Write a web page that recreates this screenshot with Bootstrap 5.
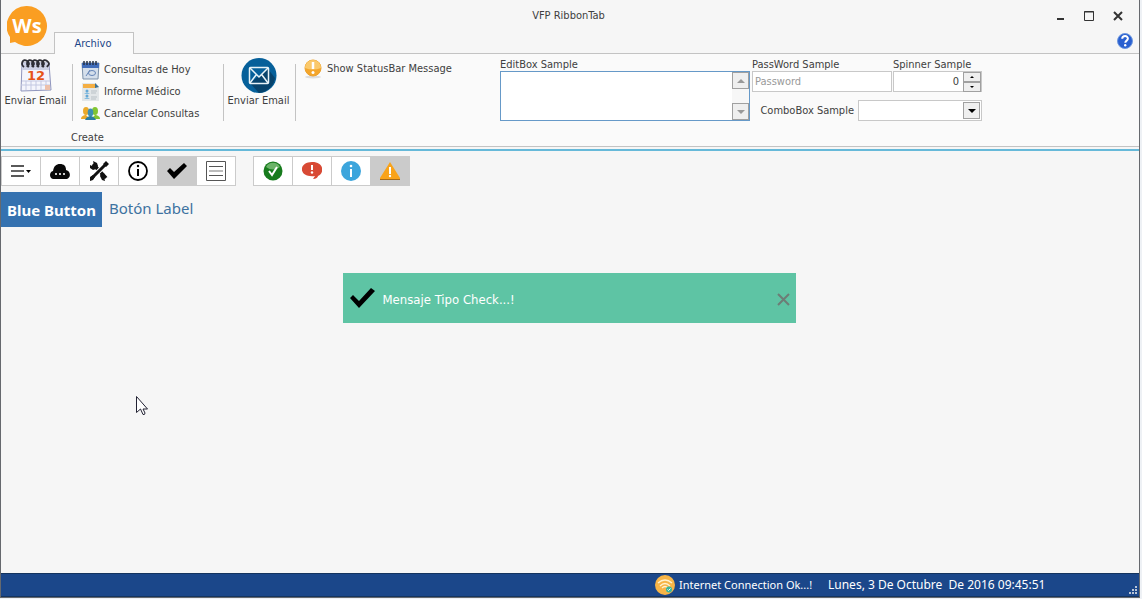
<!DOCTYPE html>
<html lang="es">
<head>
<meta charset="utf-8">
<meta name="viewport" content="width=device-width, initial-scale=1">
<title>VFP RibbonTab</title>
<link href="https://cdn.jsdelivr.net/npm/bootstrap@5.3.0/dist/css/bootstrap.min.css" rel="stylesheet">
<style>
body{background:#f6f6f6;color:#404040;font:11px/14px "DejaVu Sans Condensed","DejaVu Sans",sans-serif}
button,input,select,textarea{font:inherit;color:inherit;border-radius:0}
button{background:none;border:0;padding:0;white-space:nowrap}
svg{display:block;flex:none}
.app-window{min-height:100vh;padding-bottom:1px;background:#eef1f5;padding-right:2px}
.app-frame{border:solid #66696e;border-width:0 1px 1px;background:#f6f6f6}
.brand-logo{width:53px;padding:6px 0 0 6px}
.title-row{height:32px}
.win-title{padding-left:30px}
.win-controls{width:86px;padding-right:15px}
.tab-row{height:22px;margin-bottom:-1px}
.ribbon-tab{width:80px;border:1px solid #c3c3c3;border-bottom:0;background:#fafafa;color:#1c4587;position:relative;padding-right:2px}
.help-btn{margin:0 6px 4px 0}
.ribbon{border:solid #c3c3c3;border-width:1px 0;background:#fafafa;height:94px;padding-top:4px}
.accent-line{height:2px;background:#66b9d9;margin-top:2px}
.group-items{height:73px}
.big-btn{width:71px;height:50px;gap:1px;padding-right:2px}
.divider{width:1px;height:57px;background:#c3c3c3;margin-top:6px}
.group-caption{padding-left:70px}
.small-stack{width:150px;padding:1px 0 0 8px}
.small-stack button{height:22px}
.status-group{width:204px;padding:1px 0 0 7px}
.edit-wrap{width:250px;height:50px;border:1px solid #6699c8;background:#fff}
.edit-wrap textarea{border:0;resize:none;outline:0;overflow:hidden;background:#fff}
.scroll-col{width:17px;background:#f7f7f7}
.scroll-col button,.spin-col button,.combo-arrow{background:#efefef;border:1px solid #a0a0a0;display:flex;align-items:center;justify-content:center}
.scroll-col button{height:17px;color:#999}
.field-label{line-height:13px}
.field{border:1px solid #c8c8c8;background:#fff;height:21px;outline:0}
.field::placeholder{color:#999;opacity:1}
.field-pair{gap:1px;padding-left:2px}
.pass-field{width:140px;padding:0 2px}
.spin-field{width:89px}
.spin-field input{border:0;background:transparent;padding:0 4px;outline:0;text-align:right}
.spin-col{width:18px}
.spin-col button{height:10px}
.combo-wrap{width:124px}
.combo-wrap select{appearance:none}
.combo-arrow{position:absolute;right:2px;top:2px;width:17px;height:17px;pointer-events:none}
.tool-row{margin-top:5px;gap:17px}
.tool-set{border:1px solid #cbcbcb;background:#fff;height:30px}
.tool-set button{width:39px;border-right:1px solid #cbcbcb;display:flex;align-items:center;justify-content:center}
.tool-set button:last-child{border-right:0;width:38px}
.tool-set button.on{background:#cbcbcb}
.label-row{margin-top:6px;font-family:"Noto Sans",sans-serif}
.blue-btn{width:101px;height:35px;background:#3572b0;color:#fff;font-size:15px;font-weight:700}
.label-btn{font-size:15px;line-height:20px;color:#3d72a0;text-decoration:none;margin:6px 0 0 7px}
.toast-area{margin-top:46px;padding-right:2px}
.toast-msg{width:453px;height:50px;background:#5ec4a4;color:#fff;font-size:13px;padding:3px 6px 0}
.status-strip{height:24px;background:#1b478a;border:solid #14345f;border-width:1px 0;color:#fff;font:12px/16px "Noto Sans",sans-serif;padding-right:1px}
.conn{width:173px;font-size:11px}
.clock{width:301px;white-space:pre}
.pointer{position:absolute;left:136px;top:396px}
</style>
</head>
<body>
<div class="app-window d-flex flex-column">
<div class="app-frame flex-grow-1 d-flex flex-column">
<header class="d-flex">
  <div class="brand-logo">
    <svg width="40" height="40" viewBox="0 0 40 40"><path d="M20 0a20 20 0 1 1-12 36l-5 1V31A20 20 0 0 1 20 0Z" fill="#fa9e22"/><text x="20" y="27" text-anchor="middle" font-family="Open Sans,sans-serif" font-weight="700" font-size="20" fill="#fff">Ws</text></svg>
  </div>
  <div class="flex-grow-1">
    <div class="title-row d-flex align-items-center">
      <div class="win-title flex-grow-1 text-center">VFP RibbonTab</div>
      <div class="win-controls d-flex align-items-center justify-content-between">
        <button class="ms-1" aria-label="Minimizar"><svg width="9" height="12"><path d="M0 8h7v2H0z" fill="#333"/></svg></button>
        <button aria-label="Maximizar"><svg width="12" height="12"><path d="M1.500 1.500h9v9h-9zM1 2h10" fill="none" stroke="#333"/></svg></button>
        <button aria-label="Cerrar"><svg width="12" height="12"><path d="M2 2l8 8M10 2l-8 8" stroke="#333" stroke-width="2"/></svg></button>
      </div>
    </div>
    <div class="tab-row d-flex justify-content-between">
      <button class="ribbon-tab">Archivo</button>
      <button class="help-btn" aria-label="Ayuda"><svg width="16" height="16"><circle cx="8" cy="8" r="7.500" fill="#2a60d0" stroke="#6e98df"/><path d="M5.200 5.800c.1-3.600 5.800-3.500 5.700-.2 0 2-2.600 2-2.600 4.100" fill="none" stroke="#fff" stroke-width="2"/><circle cx="8.200" cy="12.300" r="1.200" fill="#fff"/></svg></button>
    </div>
  </div>
</header>

<section class="ribbon d-flex">
  <div>
    <div class="group-items d-flex">
      <button class="big-btn d-flex flex-column align-items-center">
        <svg width="34" height="35" viewBox="0 0 34 35"><path d="M3 5h27l2 27-30 1z" fill="#f4f5fc" stroke="#8f95bd"/><path d="M3 5h27v7H3z" fill="#cdd1e5"/><path d="M3 23h28M2 27h29M7 23v9m5-9v9m5-9v9m5-9v9m5-9v9" stroke="#c3c8e2"/><path d="M26 27h5v5h-5z" fill="#edc0aa"/><g fill="none" stroke="#2d2d35" stroke-width="1.800"><path d="M5 9C1 6 4 0 8 3s1 4 0 6m2 0c-4-3-1-9 3-6s1 4 0 6m2 0c-4-3-1-9 3-6s1 4 0 6m2 0c-4-3-1-9 3-6s1 4 0 6m2 0c-4-3-1-9 3-6s1 4 0 6"/></g><text x="17" y="22" text-anchor="middle" font-family="DejaVu Sans,sans-serif" font-size="13" font-weight="700" fill="#e65419">12</text></svg>
        <span>Enviar Email</span></button>
      <div class="divider"></div>
      <div class="small-stack d-flex flex-column align-items-start">
        <button class="d-flex align-items-center gap-1">
          <svg width="19" height="20"><path d="M1 3h17l-1 16H2z" fill="#d5dfeb" stroke="#7c91a9"/><path d="M1 3h17v5H1z" fill="#416dba"/><path d="M3 1v4m3-4v4m3-4v4m3-4v4m3-4v4" stroke="#263247" stroke-width="1.500"/><ellipse cx="11" cy="13" rx="3.500" ry="2.500" fill="none" stroke="#6585b7"/><path d="M5 16l4-6" stroke="#6585b7"/></svg>
          <span>Consultas de Hoy</span></button>
        <button class="d-flex align-items-center gap-1">
          <svg width="19" height="20"><path d="M1 1h14l3 4v14H1z" fill="#e2e6e8"/><path d="M2 2h13v4H2z" fill="#f4ae43"/><path d="M14 1l4 4-4 1z" fill="#3e7192"/><circle cx="6" cy="9" r="1.500" fill="#64a8d6"/><circle cx="6" cy="14" r="1.500" fill="#64a8d6"/><path d="M3 12q3-3 6 0zm0 5q3-3 6 0z" fill="#84bce0"/><path d="M10 9h6m-6 2h5m-5 4h6m-6 2h5" stroke="#b9c1c6"/></svg>
          <span>Informe Médico</span></button>
        <button class="d-flex align-items-center gap-1">
          <svg width="19" height="16"><g fill="#eba929"><ellipse cx="5" cy="5" rx="3" ry="4"/><path d="M0 13c0-3 3-4 5-4l4 4z"/></g><g fill="#82c531"><ellipse cx="14" cy="5" rx="3" ry="4"/><path d="M19 13c0-3-3-4-5-4l-4 4z"/></g><ellipse cx="9.500" cy="6.500" rx="2.800" ry="4" fill="#3e91b2"/><path d="M4 14c1-3 4-4 5.500-4s4 1 5.500 4z" fill="#2b7da2"/></svg>
          <span>Cancelar Consultas</span></button>
      </div>
      <div class="divider"></div>
      <button class="big-btn d-flex flex-column align-items-center">
        <svg width="36" height="35" viewBox="0 0 36 35"><circle cx="18" cy="17.500" r="17.500" fill="#06609a"/><path d="M27 11L34 20A17.500 17.500 0 0 1 18 35l-9-10z" fill="#07436c"/><g fill="none" stroke="#e8f3f8" stroke-width="1.500"><rect x="8.500" y="9.500" width="19" height="16" rx="1"/><path d="M9 10l9 9 9-9M9 25l6-8m12 8l-6-8"/></g></svg>
        <span>Enviar Email</span></button>
      <div class="divider"></div>
    </div>
    <div class="group-caption">Create</div>
  </div>
  <div class="status-group">
    <button class="d-flex align-items-center gap-1">
      <svg width="20" height="20"><ellipse cx="10" cy="18" rx="8" ry="1.500" fill="#ddd"/><circle cx="10" cy="9" r="8" fill="#f4a62c" stroke="#eda12b"/><path d="M2 9a8 8 0 0 1 16 0q-8 3-16 0" fill="#fac96c"/><path d="M10 3v7" stroke="#fff" stroke-width="2.500"/><circle cx="10" cy="13.500" r="1.500" fill="#fff"/></svg>
      <span>Show StatusBar Message</span></button>
  </div>
  <div>
    <label for="edit" class="field-label d-block">EditBox Sample</label>
    <div class="edit-wrap d-flex">
      <textarea id="edit" class="flex-grow-1"></textarea>
      <div class="scroll-col d-flex flex-column justify-content-between">
        <button aria-label="Subir"><svg width="8" height="4"><path d="M0 4l4-4 4 4z" fill="#999"/></svg></button>
        <button aria-label="Bajar"><svg width="8" height="4"><path d="M0 0l4 4 4-4z" fill="#999"/></svg></button>
      </div>
    </div>
  </div>
  <div>
    <div class="field-pair d-flex">
      <div><label for="pass" class="field-label d-block">PassWord Sample</label><input id="pass" type="password" class="field pass-field d-block" placeholder="Password"></div>
      <div><label for="spin" class="field-label d-block">Spinner Sample</label>
        <div class="field spin-field d-flex"><input id="spin" type="text" inputmode="numeric" class="flex-grow-1 w-50" value="0">
          <div class="spin-col"><button class="w-100" aria-label="Más"><svg width="4" height="2"><path d="M0 2l2-2 2 2z"/></svg></button><button class="w-100" aria-label="Menos"><svg width="4" height="2"><path d="M0 0l2 2 2-2z"/></svg></button></div></div></div>
    </div>
    <div class="d-flex justify-content-end align-items-center gap-1 mt-2">
      <label for="combo">ComboBox Sample</label>
      <div class="combo-wrap position-relative"><select id="combo" class="field w-100 d-block"><option></option></select>
        <span class="combo-arrow"><svg width="8" height="4"><path d="M0 0l4 4 4-4z"/></svg></span></div>
    </div>
  </div>
</section>
<div class="accent-line"></div>

<div class="tool-row d-flex">
  <div class="tool-set d-flex">
    <button aria-label="Menú"><svg width="20" height="14"><path d="M0 2h13M0 12h13" stroke="#222" stroke-width="1.500"/><path d="M0 7h13" stroke="#666" stroke-width="2"/><path d="M15 6h5l-2.500 3z"/></svg></button>
    <button aria-label="Nube"><svg width="20" height="16"><path d="M3 16c-4-1-4-7 0-8C4 3 6 1 10 1s6 2 6 6c5 1 5 8 1 9z" fill="#080808"/><path d="M5 10h2v2H5zm4 0h2v2H9zm4 0h2v2h-2z" fill="#ccc"/></svg></button>
    <button aria-label="Herramientas"><svg width="20" height="20"><path d="M4 3l13 14" stroke="#111" stroke-width="3.500"/><path d="M3 17L16 4" stroke="#fff" stroke-width="5"/><path d="M3 17L16 4" stroke="#111" stroke-width="3"/><path d="M1 4v3l3 2 3-1 2-3-1-3-4-2 1 4-2 1zM20 17l-4-1-1-4-3 0-1 3 2 4 3 1-1-4zM14 3l3-3 3 3-3 3zM1 16l3-2 2 2-2 3-3 1z" fill="#111"/></svg></button>
    <button aria-label="Información"><svg width="20" height="20"><circle cx="10" cy="10" r="9" fill="none" stroke="#000" stroke-width="1.800"/><path d="M10 8v7" stroke="#000" stroke-width="2"/><circle cx="10" cy="5" r="1.200"/></svg></button>
    <button class="on" aria-label="Marcar"><svg width="20" height="16"><path d="M0 8l3-3 4 4L17 0l3 3L7 16z"/></svg></button>
    <button aria-label="Lista"><svg width="20" height="20"><path d="M.5.500h19v19H.5zM3 5.500h14M3 14.500h14" fill="none" stroke="#555"/><path d="M3 10h14" stroke="#bbb" stroke-width="2"/></svg></button>
  </div>
  <div class="tool-set d-flex">
    <button aria-label="Correcto"><svg width="20" height="20"><circle cx="10" cy="10" r="9.500" fill="#177b1d"/><path d="M3 6a8 8 0 0 1 14 0q-7 5-14 0" fill="#6bb368"/><path d="M6 10l3 4 5-8" fill="none" stroke="#fff" stroke-width="2"/></svg></button>
    <button aria-label="Alerta"><svg width="20" height="20"><path d="M10 1c13 0 12 12 6 14 0 1-2 3-5 3l2-3C-4 17-4 1 10 1" fill="#d84a35"/><path d="M10 4v5" stroke="#fff" stroke-width="2"/><circle cx="10" cy="11.500" r="1.200" fill="#fff"/></svg></button>
    <button aria-label="Detalle"><svg width="20" height="20"><circle cx="10" cy="10" r="10" fill="#3ca5dc"/><path d="M10 8v8" stroke="#fff" stroke-width="2"/><circle cx="10" cy="5" r="1.300" fill="#fff"/></svg></button>
    <button class="on" aria-label="Advertencia"><svg width="20" height="19"><path d="M10 0l10 16v2H0v-2z" fill="#f9a31a"/><path d="M0 17h20v1H0z" fill="#a66b19"/><path d="M10 5v7" stroke="#fff" stroke-width="2"/><circle cx="10" cy="14" r="1.200" fill="#fff"/></svg></button>
  </div>
</div>

<div class="label-row d-flex align-items-start">
  <button class="blue-btn">Blue Button</button>
  <a href="#" class="label-btn">Botón Label</a>
</div>

<div class="toast-area d-flex justify-content-center">
<div class="toast-msg d-flex align-items-center" role="alert">
  <svg class="mb-1" width="26" height="20"><path d="M1 10l3-3 6 6L22 0l4 3-16 17z"/></svg>
  <span class="ms-2 flex-grow-1">Mensaje Tipo Check...!</span>
  <button aria-label="Cerrar mensaje"><svg width="13" height="13"><path d="M1 1l11 11M12 1L1 12" stroke="#6d7d76" stroke-width="2"/></svg></button>
</div>
</div>

<footer class="status-strip d-flex justify-content-end align-items-center mt-auto">
  <div class="conn d-flex align-items-center gap-1">
    <svg width="20" height="20"><circle cx="10" cy="10" r="10" fill="#f7b547"/><path d="M3 8q7-6 14 0M5 11q5-5 10 0M7 13q3-3 6 0" fill="none" stroke="#fff3d0" stroke-width="1.300"/><circle cx="14" cy="14.500" r="3" fill="#3ab79c"/><path d="M12.500 14.500l1 1 2-2" fill="none" stroke="#fff"/></svg>
    <span>Internet Connection Ok...!</span></div>
  <div class="clock">Lunes, 3 De Octubre  De 2016 09:45:51</div>
  <svg width="9" height="20"><path d="M6 11h2v2H6zM3 14h2v2H3zm3 0h2v2H6zM0 17h2v2H0zm3 0h2v2H3zm3 0h2v2H6z" fill="#b9c5d6"/></svg>
</footer>
</div>
</div>
<svg class="pointer" width="12" height="20" aria-hidden="true"><path d="M.5.500v16l4-3.500 2.500 5.500q2 .5 2-1.500l-2-4h4.500z" fill="#fff" stroke="#223"/></svg>
<script src="https://cdn.jsdelivr.net/npm/bootstrap@5.3.0/dist/js/bootstrap.bundle.min.js"></script>
</body>
</html>
